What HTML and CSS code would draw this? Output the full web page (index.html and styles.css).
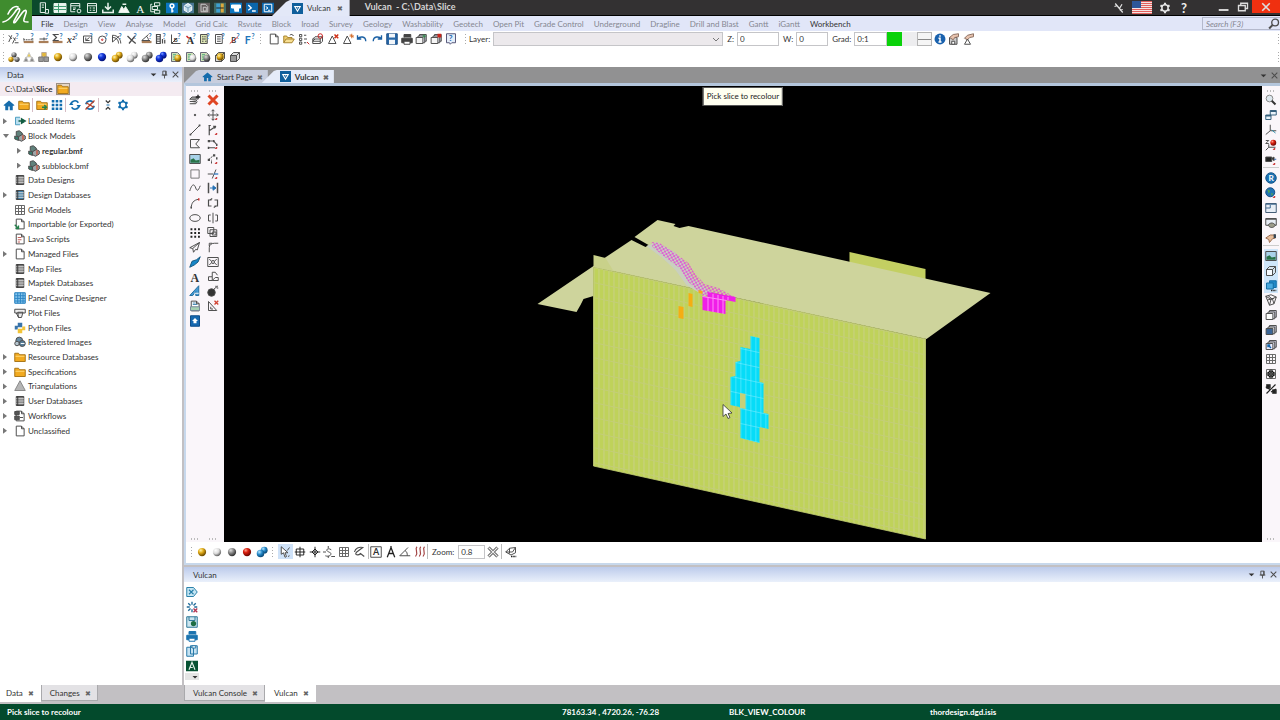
FILE: index.html
```
<!DOCTYPE html>
<html lang="en">
<head>
    <meta charset="UTF-8">
    <meta name="viewport" content="width=device-width, initial-scale=1.0">
    <title>Vulcan - C:\Data\Slice</title>
    <link rel="stylesheet" href="styles.css">
</head>
<body>
    <svg class="defs" aria-hidden="true">
        <defs>
            <radialGradient id="gold" cx=".35" cy=".3" r=".7"><stop offset="0" stop-color="#fff3a8"/><stop offset=".45" stop-color="#e0aa18"/><stop offset="1" stop-color="#6d4c00"/></radialGradient>
            <radialGradient id="silver" cx=".35" cy=".3" r=".7"><stop offset="0" stop-color="#fff"/><stop offset=".55" stop-color="#dcdcdc"/><stop offset="1" stop-color="#666"/></radialGradient>
            <radialGradient id="grey" cx=".35" cy=".3" r=".7"><stop offset="0" stop-color="#ddd"/><stop offset=".5" stop-color="#858585"/><stop offset="1" stop-color="#333"/></radialGradient>
            <radialGradient id="blue" cx=".35" cy=".3" r=".7"><stop offset="0" stop-color="#7e9cff"/><stop offset=".4" stop-color="#1237dc"/><stop offset="1" stop-color="#02107a"/></radialGradient>
            <radialGradient id="red" cx=".35" cy=".3" r=".7"><stop offset="0" stop-color="#ffa08c"/><stop offset=".4" stop-color="#dc2010"/><stop offset="1" stop-color="#6d0500"/></radialGradient>
            <radialGradient id="sky" cx=".35" cy=".3" r=".7"><stop offset="0" stop-color="#b8e6ff"/><stop offset=".5" stop-color="#2488c8"/><stop offset="1" stop-color="#084876"/></radialGradient>
        </defs>
    </svg>

    <header class="top">
        <div class="logo">
            <svg viewBox="0 0 32 30"><path d="M3 22c6-1 9-6 12-10 3-5 6-4 4 0l-5 9c-1 3 1 2 3-1l5-7c3-4 5-3 4 0l-2 6c-1 3 1 3 4 3M8 14c2-5 7-9 10-7" fill="none" stroke="#fff" stroke-width="1.6" stroke-linecap="round"/></svg>
        </div>
        <div class="top-main">
            <div class="titlebar">
                <div class="quick" data-icons="q-server q-table q-windowgear q-list q-download q-terrain q-letter q-flow q-key q-cube q-copy q-python q-plotter q-prompt q-console"></div>
                <div class="app-tab"><i data-icon="vulcan"></i><span>Vulcan</span><button class="tab-close" aria-label="Close">✖</button></div>
                <h1>Vulcan &nbsp;- C:\Data\Slice</h1>
                <div class="window-tools">
                    <button aria-label="Effects"><i data-icon="wand"></i></button>
                    <button class="flag" aria-label="Language"><svg viewBox="0 0 20 13"><path fill="#f4e4e4" d="M0 0h20v13H0z"/><path d="M0 .5h20M0 2.5h20M0 4.5h20M0 6.5h20M0 8.5h20M0 10.5h20M0 12.5h20" stroke="#e2605c"/><path fill="#2d5798" d="M0 0h9v7H0z"/></svg></button>
                    <button aria-label="Settings"><i data-icon="gear-light"></i></button>
                    <button class="help" aria-label="Help">?</button>
                </div>
                <div class="window-buttons">
                    <button aria-label="Minimize"><i data-icon="minimize"></i></button>
                    <button aria-label="Restore"><i data-icon="restore"></i></button>
                    <button class="close" aria-label="Close window"><i data-icon="close"></i></button>
                </div>
            </div>
            <div class="menubar">
                <nav>
                    <a class="on" href="#">File</a><a href="#">Design</a><a href="#">View</a><a href="#">Analyse</a><a href="#">Model</a><a href="#">Grid Calc</a><a href="#">Rsvute</a><a href="#">Block</a><a href="#">Iroad</a><a href="#">Survey</a><a href="#">Geology</a><a href="#">Washability</a><a href="#">Geotech</a><a href="#">Open Pit</a><a href="#">Grade Control</a><a href="#">Underground</a><a href="#">Dragline</a><a href="#">Drill and Blast</a><a href="#">Gantt</a><a href="#">iGantt</a><a class="on" href="#">Workbench</a>
                </nav>
                <label class="search"><input type="text" placeholder="Search (F3)" aria-label="Search"><i data-icon="search"></i></label>
            </div>
        </div>
    </header>

    <div class="toolbars">
        <div class="toolbar">
            <span class="grip"></span>
            <div class="tools query" data-icons="ask-xyz ask-dist ask-edge ask-sum ask-power ask-area ask-circle ask-arc ask-cross ask-angle ask-cols ask-axis ask-text ask-note ask-page ask-label ask-font"></div>
            <span class="grip"></span>
            <div class="tools files" data-icons="new open layers-list layer-del tri-del tri-new undo redo save print sheets sheets-red help-page"></div>
            <span class="grip"></span>
            <label class="field">Layer: <select class="layer"><option></option></select></label>
            <label class="field">Z: <input class="z" type="text" value="0"></label>
            <label class="field">W: <input class="w" type="text" value="0"></label>
            <label class="field">Grad: <input class="grad" type="text" value="0:1"></label>
            <button class="swatch" aria-label="Colour"></button><button class="pattern" aria-label="Pattern"></button><button class="line-style" aria-label="Line style"></button>
            <div class="tools marks" data-icons="info hand-save hand-tri"></div>
            <span class="grip end"></span>
        </div>
        <div class="toolbar">
            <span class="grip"></span>
            <div class="tools shading" data-icons="balls tri-light boxes ball-gold ball-silver ball-grey ball-blue pair-gold pair-silver pair-grey pair-blue file-gold file-silver file-grey cube-gold cube-grey"></div>
            <span class="grip end"></span>
        </div>
    </div>

    <div class="workspace">
        <aside class="side">
            <div class="panel-head"><h2>Data</h2><div class="panel-buttons" data-icons="drop pin shut"></div></div>
            <div class="path"><span>C:\Data\<b>Slice</b></span><button aria-label="Browse"><i data-icon="folder"></i></button></div>
            <div class="side-tools">
                <div data-icons="home folder"></div>
                <div data-icons="folder-go tiles"></div>
                <div data-icons="sync unsync"></div>
                <div data-icons="collapse gear"></div>
            </div>
            <ul class="tree">
                <li class="more"><a href="#"><i data-icon="loaded"></i>Loaded Items</a></li>
                <li class="more open"><a href="#"><i data-icon="blocks"></i>Block Models</a></li>
                <li class="more child"><a href="#"><i data-icon="blocks"></i><b>regular.bmf</b></a></li>
                <li class="more child"><a href="#"><i data-icon="blocks"></i>subblock.bmf</a></li>
                <li><a href="#"><i data-icon="db"></i>Data Designs</a></li>
                <li class="more"><a href="#"><i data-icon="db-blue"></i>Design Databases</a></li>
                <li><a href="#"><i data-icon="grid"></i>Grid Models</a></li>
                <li><a href="#"><i data-icon="import"></i>Importable (or Exported)</a></li>
                <li><a href="#"><i data-icon="script"></i>Lava Scripts</a></li>
                <li class="more"><a href="#"><i data-icon="new"></i>Managed Files</a></li>
                <li><a href="#"><i data-icon="db"></i>Map Files</a></li>
                <li><a href="#"><i data-icon="db"></i>Maptek Databases</a></li>
                <li><a href="#"><i data-icon="panel"></i>Panel Caving Designer</a></li>
                <li><a href="#"><i data-icon="plot"></i>Plot Files</a></li>
                <li><a href="#"><i data-icon="python"></i>Python Files</a></li>
                <li><a href="#"><i data-icon="images"></i>Registered Images</a></li>
                <li class="more"><a href="#"><i data-icon="folder"></i>Resource Databases</a></li>
                <li class="more"><a href="#"><i data-icon="folder"></i>Specifications</a></li>
                <li class="more"><a href="#"><i data-icon="triangle"></i>Triangulations</a></li>
                <li class="more"><a href="#"><i data-icon="db"></i>User Databases</a></li>
                <li class="more"><a href="#"><i data-icon="workflow"></i>Workflows</a></li>
                <li class="more"><a href="#"><i data-icon="new"></i>Unclassified</a></li>
            </ul>
            <div class="bottom-tabs">
                <div class="bottom-tab active">Data <button class="tab-close" aria-label="Close">✖</button></div>
                <div class="bottom-tab">Changes <button class="tab-close" aria-label="Close">✖</button></div>
            </div>
        </aside>

        <main class="main">
            <div class="doc-tabs">
                <div class="doc-tab"><i data-icon="home"></i>Start Page <button class="tab-close" aria-label="Close">✖</button></div>
                <div class="doc-tab active"><i data-icon="vulcan"></i>Vulcan <button class="tab-close" aria-label="Close">✖</button></div>
                <div class="panel-buttons" data-icons="drop shut"></div>
            </div>
            <div class="document">
                <div class="canvas-row">
                    <div class="toolbox">
                        <div class="column">
                            <span class="grip-h"></span>
                            <div class="column-tools create" data-icons="layers-add point line polygon picture square curve arc ellipse dots plane brush letter-a mirror-a csv vulcan-up"></div>
                            <span class="grip-h low"></span>
                        </div>
                        <div class="column">
                            <span class="grip-h"></span>
                            <div class="column-tools edit" data-icons="delete move pt-move pt-join pt-insert pt-trim span break split group fillet expand stack bomb tri-cut"></div>
                            <span class="grip-h low"></span>
                        </div>
                    </div>
                    <div class="viewport">
                        <svg class="scene" viewBox="224 86 1037 456" preserveAspectRatio="xMidYMid meet" role="img" aria-label="Block model slice">
                            <defs>
                                <pattern id="cells" width="5" height="15" patternUnits="userSpaceOnUse" patternTransform="translate(593 267) skewY(12.3)">
                                    <rect width="5" height="15" fill="#bfd25a"/>
                                    <path d="M.5 0v15" stroke="#c8d088"/>
                                    <path d="M0 .5h5" stroke="#c3cd78"/>
                                </pattern>
                                <pattern id="blocks" width="5" height="15" patternUnits="userSpaceOnUse" patternTransform="translate(740 348) skewY(12.3)">
                                    <path d="M0 0v15M0 0h5" stroke="#8ceeff"/>
                                </pattern>
                                <pattern id="specks" width="4" height="4" patternUnits="userSpaceOnUse" patternTransform="rotate(15)">
                                    <path d="M0 1h2M2 3h2" stroke="#e33fd8" stroke-width="1.4"/>
                                </pattern>
                            </defs>
                            <path fill="#c3cf62" d="M849 252l76 17v12l-76-17z"/>
                            <path fill="#ced49c" d="M537 304l56-38 11-8 27-18 14 7 3-2-14-8 23-17 18 4-2 2 6 2 9-2 302 67-64 46-333-72v29l-10 3-3 6-4 7z"/>
                            <path fill="url(#cells)" stroke="#c4cf74" stroke-width=".8" d="M593 267l332 72v200l-332-73z"/>
                            <path fill="#c9d18a" d="M593 255l12 3 8 13-20-4z"/>
                            <path fill="#c9cfc0" d="M646 246l10-4 18 10 12 12 6 13 20 16-8 3-18-11-11-15-13-12z"/>
                            <path fill="url(#specks)" d="M651 242l8 1 14 9 15 11 6 10 10 11 14 4 18 10-9 2-25-5-14-13-9-14-16-12-11-9z"/>
                            <path fill="#f01ee8" d="M702 296l5 1v-5l28 5v5l-10-2v14l-23-4z"/>
                            <path stroke="#ff8cf8" d="M707.5 297v14M712.5 294v18M717.5 295v18M722.5 296v18M727.5 297v3M702 296.5l24 4" fill="none"/>
                            <path fill="#f5ad12" d="M688 293l4 1v13l-4-1zM678 306l5 1v12l-5-1zM698 290l4 1v3l-4-1z"/>
                            <path fill="#06dcf8" d="M750 336l9 2v44l4 1v30l5 1v15l-9-2v16l-19-5v-29l-1-2-9-2v-28l5-1v-14l5-1v-14l10 2z"/>
                            <path fill="url(#blocks)" d="M750 336l9 2v44l4 1v30l5 1v15l-9-2v16l-19-5v-29l-1-2-9-2v-28l5-1v-14l5-1v-14l10 2z"/>
                            <path fill="#c5d077" d="M739.5 393l5.500 1v15l-5.500-1z"/>
                            <path d="M722.5 404.5v12l3-2.500 2 4.500 2-1-2-4 4-.5z" fill="#fff" stroke="#333" stroke-width=".8"/>
                        </svg>
                        <div class="tooltip">Pick slice to recolour</div>
                    </div>
                    <div class="toolbox right">
                        <div class="column">
                            <span class="grip-h"></span>
                            <div class="column-tools five" data-icons="zoom windows axes axes-ball camera"></div>
                            <div class="column-tools five" data-icons="reset globe window window-eye hand"></div>
                            <div class="column-tools ten" data-icons="picture cube-on layers-on mesh cube-back cube-solid cube-view grid grid-target scene-cut"></div>
                            <span class="grip-h low"></span>
                        </div>
                    </div>
                </div>
                <div class="view-bar">
                    <span class="grip"></span>
                    <div class="tools five-tools" data-icons="ball-gold ball-silver ball-grey ball-red pair-sky"></div>
                    <span class="grip"></span>
                    <div class="tools six-tools" data-icons="select snap-grid snap-point snap-s grid snap-curve"></div>
                    <div class="tools four-tools" data-icons="a-box a-compass angle waves"></div>
                    <label class="field zoom">Zoom: <input type="text" value="0.8"></label>
                    <div class="tools one-tool" data-icons="zoom-fit"></div>
                    <div class="tools one-tool" data-icons="mesh-dots"></div>
                </div>
            </div>

            <section class="console">
                <div class="panel-head"><h2>Vulcan</h2><div class="panel-buttons" data-icons="drop pin shut"></div></div>
                <div class="console-body">
                    <div class="console-tools" data-icons="tag burst save-go print-blue clipboard maptek"></div>
                    <button class="overflow" aria-label="More tools"><i data-icon="drop"></i></button>
                </div>
                <div class="bottom-tabs">
                    <div class="bottom-tab">Vulcan Console <button class="tab-close" aria-label="Close">✖</button></div>
                    <div class="bottom-tab active">Vulcan <button class="tab-close" aria-label="Close">✖</button></div>
                </div>
            </section>
        </main>
    </div>

    <footer class="status">
        <span>Pick slice to recolour</span>
        <span>78163.34 , 4720.26, -76.28</span>
        <span>BLK_VIEW_COLOUR</span>
        <span>thordesign.dgd.isis</span>
    </footer>
    <script src="icons.js"></script>
</body>
</html>
```
FILE: styles.css
```
* {
    margin: 0;
    padding: 0;
    box-sizing: border-box;
}

body {
    height: 100vh;
    display: flex;
    flex-direction: column;
    overflow: hidden;
    background: #fff;
    color: #333;
    font-family: 'Segoe UI', Lato, 'Open Sans', sans-serif;
    font-size: 8px;
    line-height: 12px;
}

button, input, select {
    font: inherit;
    color: inherit;
    border: 0;
    background: none;
    min-width: 0;
}

button {
    display: flex;
    align-items: center;
    justify-content: center;
}

a {
    color: inherit;
    text-decoration: none;
}

i {
    display: flex;
    flex: none;
}

.defs {
    position: absolute;
    width: 0;
    height: 0;
}

.icon {
    width: 12px;
    height: 12px;
    overflow: visible;
    fill: none;
    stroke: #4c4c4c;
    stroke-width: 1.3;
}

.icon text {
    stroke: none;
    fill: #333;
    font-size: 11px;
    line-height: 11px;
    font-weight: bold;
}

.icon .ask {
    fill: #3478b4;
    font-size: 9px;
    line-height: 9px;
}

/* title and menu */
.top {
    display: flex;
    height: 31px;
    flex: none;
}

.logo {
    width: 32px;
    height: 30px;
    background: #3f8c2e;
}

.top-main {
    flex: 1;
    display: flex;
    flex-direction: column;
}

.titlebar {
    display: flex;
    height: 16px;
    background: linear-gradient(90deg, #0b4a2c 130px, #333132 200px);
    border-bottom: 1px solid #000;
}

.quick {
    display: flex;
    align-items: center;
    margin-left: 4px;
}

.quick button {
    width: 16px;
    height: 15px;
}

.quick .icon {
    width: 14px;
    height: 12px;
    stroke: #e8f2ec;
}

.app-tab {
    display: flex;
    align-items: center;
    gap: 4px;
    height: 16px;
    padding: 0 7px 0 20px;
    background: #e3e8f8;
    clip-path: polygon(0 100%, 14px 2px, 18px 0, 100% 0, 100% 100%);
    margin-left: -4px;
}

.app-tab .icon {
    width: 11px;
    height: 11px;
}

.tab-close {
    font-size: 7px;
    color: #666;
    line-height: 8px;
}

.app-tab .tab-close {
    margin-left: 2px;
}

h1 {
    margin-left: 15px;
    font-size: 9px;
    line-height: 14px;
    font-weight: bold;
    color: #d5d5d5;
}

.window-tools {
    display: flex;
    align-items: center;
    gap: 7px;
    margin-left: auto;
    color: #eee;
}

.window-tools .icon {
    stroke: #e5e5e5;
}

.flag svg {
    width: 20px;
    height: 13px;
}

.help {
    font-size: 13px;
    font-weight: bold;
    width: 12px;
}

.window-buttons {
    display: flex;
    margin-left: 24px;
}

.window-buttons button {
    width: 19px;
    height: 13px;
}

.window-buttons .icon {
    stroke: #ddd;
}

.window-buttons .close {
    width: 28px;
    background: #f03010;
}

.menubar {
    flex: 1;
    display: flex;
    align-items: center;
    background: #e1e6f8;
}

nav {
    display: flex;
    gap: 10px;
    padding-left: 9px;
    color: #858791;
    white-space: nowrap;
}

nav .on {
    color: #333;
}

.search {
    display: flex;
    align-items: center;
    width: 78px;
    height: 13px;
    margin-left: auto;
    padding-left: 3px;
    border: 1px solid #b4b9cc;
    border-right: 0;
}

.search input {
    flex: 1;
    font-style: italic;
}

.search input::placeholder {
    color: #858791;
}

/* toolbars */
.toolbars {
    height: 36px;
    flex: none;
}

.toolbar {
    display: flex;
    align-items: center;
    height: 16px;
}

.toolbar + .toolbar {
    height: 20px;
}

.grip {
    width: 3px;
    height: 12px;
    margin: 0 2px;
    flex: none;
    background: radial-gradient(circle, #aaa 1px, transparent 1px) 0 0 / 3px 3px;
}

.grip.end {
    margin-left: auto;
    margin-right: 0;
}

.tools {
    display: flex;
    flex: none;
}

.tools button {
    flex: 1;
    height: 15px;
}

.query {
    width: 250px;
}

.files {
    width: 191px;
    margin: 0 4px 0 3px;
}

.shading {
    width: 235px;
}

.marks {
    width: 44px;
}

.field {
    display: flex;
    align-items: center;
    gap: 3px;
    margin-right: 4px;
    white-space: nowrap;
}

.field input, .field select {
    height: 14px;
    border: 1px solid #c5c5c8;
    background: #fff;
    padding: 0 2px;
}

.field .layer {
    width: 230px;
    appearance: none;
    background:
        linear-gradient(45deg, transparent 45%, #777 45% 65%, transparent 65%) 219px 5px / 3px 3px no-repeat,
        linear-gradient(-45deg, transparent 45%, #777 45% 65%, transparent 65%) 222px 5px / 3px 3px no-repeat,
        #ece9ec;
}

.z {
    width: 42px;
}

.w {
    width: 32px;
}

.field .grad {
    width: 33px;
    margin-right: -4px;
}

.swatch, .pattern, .line-style {
    width: 15px;
    height: 14px;
    background: #0ad20a;
}

.pattern {
    background: #ededef;
}

.line-style {
    border: 1px solid #b5b5b5;
    background: linear-gradient(#888, #888) 0 50% / 100% 1px no-repeat #f5f5f5;
}

/* data panel */
.workspace {
    flex: 1;
    display: flex;
    min-height: 0;
    background: #c2c0c3;
}

.side {
    width: 182px;
    flex: none;
    display: flex;
    flex-direction: column;
    background: #fff;
}

.panel-head {
    display: flex;
    align-items: center;
    justify-content: space-between;
    height: 15px;
    flex: none;
    padding: 0 1px 0 7px;
    background: linear-gradient(#bccbeb, #eaf0fb);
}

h2 {
    font-size: 8px;
    font-weight: normal;
}

.panel-buttons {
    display: flex;
}

.panel-buttons button {
    width: 11px;
}

.panel-buttons .icon {
    width: 9px;
    height: 9px;
}

.path {
    display: flex;
    align-items: center;
    gap: 4px;
    height: 14px;
    padding-left: 5px;
    background: #f4ebf1;
}

.path button {
    width: 14px;
    height: 12px;
    border: 1px solid #9a8f83;
    background: #e4d5c4;
}

.side-tools {
    display: flex;
    padding: 2px;
}

.side-tools div {
    display: flex;
    gap: 1px;
    padding-right: 1px;
    margin-right: 2px;
    border-right: 1px solid #d5bcc4;
}

.side-tools div:last-child {
    border: 0;
}

.side-tools button {
    width: 14px;
    height: 14px;
}

.tree {
    display: grid;
    grid-auto-rows: 1fr;
    height: 324px;
    list-style: none;
}

.tree li {
    display: flex;
    align-items: center;
    padding-left: 14px;
}

.tree a {
    display: flex;
    align-items: center;
    gap: 2px;
}

.tree .child {
    padding-left: 28px;
}

.tree .more::before {
    content: "";
    width: 4px;
    height: 6px;
    margin: 0 7px 0 -11px;
    background: #777;
    clip-path: polygon(0 0, 100% 50%, 0 100%);
}

.tree .more.open::before {
    width: 6px;
    height: 4px;
    margin: 0 5px 0 -11px;
    clip-path: polygon(0 0, 100% 0, 50% 100%);
}

.bottom-tabs {
    display: flex;
    align-items: flex-start;
    height: 19px;
    margin-top: auto;
    background: #c2c0c3;
}

.bottom-tab {
    display: flex;
    align-items: center;
    gap: 5px;
    height: 16px;
    padding: 0 6px 0 8px;
    border: 1px solid #a9a9ac;
    border-top: 0;
    background: #e3e2e5;
}

.bottom-tab.active {
    height: 17px;
    border-color: #fff;
    background: #fff;
}

.side .bottom-tab.active {
    padding-left: 5px;
}

/* document */
.main {
    flex: 1;
    display: flex;
    flex-direction: column;
    min-width: 0;
    margin-left: 2px;
}

.doc-tabs {
    display: flex;
    align-items: flex-end;
    height: 16px;
    flex: none;
    background: #919192;
}

.doc-tab {
    display: flex;
    align-items: center;
    gap: 4px;
    height: 13px;
    padding: 0 5px 0 18px;
    background: #c8cede;
    clip-path: polygon(0 100%, 12px 1px, 15px 0, 100% 0, 100% 100%);
}

.doc-tab .icon {
    width: 11px;
    height: 11px;
}

.doc-tab.active {
    margin-left: -6px;
    background: #e6ecf9;
    font-weight: bold;
}

.doc-tabs .panel-buttons {
    margin-left: auto;
    align-self: center;
}

.document {
    flex: 1;
    display: flex;
    flex-direction: column;
    min-height: 0;
    border: 2px solid #c7d8ec;
    border-top: 3px solid #b4c6dc;
    border-right: 0;
    background: #fff;
}

.canvas-row {
    flex: 1;
    display: flex;
    min-height: 0;
}

.toolbox {
    display: flex;
    padding-right: 2px;
    background: #faf6fa;
}

.column {
    width: 18px;
    display: flex;
    flex-direction: column;
}

.grip-h {
    height: 4px;
    margin: 3px 4px 0;
    background: radial-gradient(circle, #bbb 1px, transparent 1px) 0 0 / 3px 4px;
}

.grip-h.low {
    margin: auto 4px 1px;
}

.column-tools {
    display: grid;
    grid-auto-rows: 1fr;
}

.create {
    height: 235px;
}

.edit {
    height: 220px;
}

.five {
    height: 74px;
    margin-bottom: 4px;
    box-shadow: 0 2px 0 -1px #ccc;
}

.ten {
    height: 147px;
}

.right {
    padding: 0;
}

.ten button:nth-child(-n+3) {
    background: #cfe6fa;
    margin: 0 2px;
}

.viewport {
    flex: 1;
    position: relative;
    background: #000;
    overflow: hidden;
}

.scene {
    display: block;
    width: 100%;
    height: 100%;
}

.tooltip {
    position: absolute;
    top: 1px;
    left: 50%;
    transform: translateX(-50%);
    padding: 2px 3px 3px;
    border: 1px solid #555;
    background: #fffff0;
    color: #222;
    white-space: nowrap;
}

.view-bar {
    display: flex;
    align-items: center;
    height: 21px;
    flex: none;
    padding: 0 0 2px 2px;
}

.five-tools {
    width: 74px;
}

.six-tools {
    width: 88px;
    margin-left: 2px;
}

.six-tools button:first-child {
    background: #cfe2f8;
}

.four-tools {
    width: 60px;
    border-left: 1px solid #bbb;
    border-right: 1px solid #bbb;
    margin: 0 4px 0 2px;
}

.zoom {
    margin-right: 0;
    gap: 4px;
}

.zoom input {
    width: 27px;
}

.one-tool {
    width: 16px;
}

.one-tool + .one-tool {
    width: 18px;
    border-left: 1px solid #bbb;
}

/* console */
.console {
    height: 137px;
    flex: none;
    margin-top: 2px;
    display: flex;
    flex-direction: column;
}

.console .panel-head {
    padding-left: 9px;
}

.console-body {
    flex: 1;
    display: flex;
    flex-direction: column;
    padding: 3px 1px;
    background: #fff;
}

.console-tools {
    display: grid;
    grid-auto-rows: 1fr;
    width: 14px;
    height: 88px;
}

.overflow {
    width: 14px;
    height: 7px;
    justify-content: flex-end;
    background: #e5e5e5;
}

.overflow .icon {
    width: 8px;
    height: 8px;
}

.status {
    display: grid;
    grid-template-columns: 555fr 167fr 201fr 350fr;
    align-items: center;
    height: 16px;
    flex: none;
    padding-left: 7px;
    background: #034a2c;
    color: #fff;
    font-weight: bold;
}
```
FILE: icons.js
```
const ask = '<text class="ask" x="10" y="8">?</text>';
const ball = (c, x = 8, y = 8, r = 5.5) => `<circle cx="${x}" cy="${y}" r="${r}" fill="url(#${c})" stroke="none"/>`;
const pair = c => ball(c, 11, 5.5, 4.5) + ball(c, 6, 10, 5);
const file = c => `<path d="M2 2h8l3 3v9H2z" fill="#cfdfb8" stroke="#667"/><path d="M4 5h4M4 8h3M4 11h3" stroke="#4a7"/>` + ball(c, 10.5, 9.5, 4.5);
const cube = (front, side) => `<path d="M2 6h8v8H2z" fill="${front}"/><path d="M2 6l4-4h8v8l-4 4V6zM10 6l4-4" fill="${side}"/>`;
const tile = (c, inner) => `<path d="M0 1h16v14H0z" fill="${c}" stroke="none"/>${inner}`;
const page = '<path d="M3 1.5h7l3.5 3.5v9.5H3z" fill="#fff"/><path d="M10 1.5V5h3.5"/>';
const db = c => `<path d="M3 2h10v12H3z" fill="${c}" stroke="#444"/><path d="M3 5h10M3 8h10M3 11h10" stroke="#ddd"/><path d="M5 2v12" stroke="#333"/>`;
const folder = '<path d="M1 3h5l1.5 2H15v9H1z" fill="#f2aa20" stroke="#a87518"/><path d="M2 7h12" stroke="#ffd978"/>';
const disk = '<path d="M1 1h14v14H1z" fill="#2868a8" stroke="#1d4f86"/><path d="M4 1h8v5H4zM4 9h8v6H4z" fill="#f2f6fa" stroke="none"/>';
const printer = c => `<path d="M4 6V2h9v4M1 7h14v6H1z" fill="${c}" stroke="${c}"/><path d="M4 11h8v4H4z" fill="#fff" stroke="${c}"/>`;
const corner = '<path d="M13 12v2h-2z" fill="#c33" stroke="#c33"/>';
const brown = '<path d="M1 12h13" stroke="#a97e58" stroke-width="3"/>';
const cubeStack = (f, extra = '') => `<path d="M6 2h9v9H6z" fill="#ccd"/><path d="M4 4h9v9H4z" fill="#e5e5ee"/><path d="M1.5 6h9v8h-9z" fill="${f}"/>${extra}`;
const gear = '<circle cx="8" cy="8" r="4.2" stroke-width="2"/><path d="M8 1v3M8 12v3M1.9 4.5l2.6 1.5M11.5 10l2.6 1.5M1.9 11.5L4.5 10M11.5 6l2.6-1.5" stroke-width="2.8"/>';
const pic = '<path d="M1 2h14v12H1z" fill="#a9d2ea"/><path d="M2 13V9l4-2 3 3 5-1v4z" fill="#287348" stroke="none"/>';
const gridLines = '<path d="M2 2h12v12H2zM2 6h12M2 10h12M6 2v12M10 2v12" stroke="#666"/>';

const icons = {
    'q-server': '<path d="M3 1h7v13H3zM5 4h3M5 7h3M10 10h4v5h-5" />',
    'q-table': '<path d="M0 2h16v12H0z" fill="#e9f5ed"/><path d="M0 6h16M0 10h16M6 2v12" stroke="#3d9a70"/>',
    'q-windowgear': '<path d="M1 2h12v6M1 2v11h6M1 5h12M4 8h4M4 10h3"/><circle cx="12" cy="12" r="2.5"/>',
    'q-list': '<path d="M2 2h12v12H2zM2 5h12M5 8h2M9 8h3M5 11h2M9 11h3"/>',
    'q-download': '<path d="M8 1v8M4 6l4 4 4-4M1 10v4h14v-4" stroke-width="2"/>',
    'q-terrain': '<path d="M1 14l4-8 3 4 2-4 5 8z" fill="#f4f8f5"/><path d="M6 3h5" stroke-width="2"/>',
    'q-letter': '<text x="3" y="14" style="fill:#f1f6f3;font:15px Liberation Serif,serif">A</text>',
    'q-flow': '<path d="M6 1h7v4H6zM3 6h7v4H3zM6 11h7v4H6zM3 3H1v10h5"/>',
    'q-key': tile('#0b76c0', '<circle cx="8" cy="5" r="2.5" stroke-width="2" stroke="#fff"/><path d="M8 8v6M8 12h2" stroke="#fff" stroke-width="2"/>'),
    'q-cube': tile('#4a7896', '<path d="M3 5l5-3 5 3v6l-5 3-5-3z" fill="#c8e0ee" stroke="#fff"/><path d="M3 5l5 3 5-3M8 8v6" stroke="#6d9ab4"/>'),
    'q-copy': tile('#645f5e', '<path d="M4 3h6l3 3v7H4z" stroke="#ccc"/><path d="M7 7h4v5H7z" stroke="#ccc"/>'),
    'q-python': tile('#3f6d68', '<path d="M3 2h5v12H3z" fill="#3da0d0" stroke="none"/><path d="M9 2h4v12H9z" fill="#dca83c" stroke="none"/><path d="M3 8h10" stroke="#222"/>'),
    'q-plotter': tile('#0b76c0', '<path d="M2 4h12v4H2z" fill="#fff" stroke="#fff"/><path d="M5 8h7v5H6z" fill="#fff" stroke="none"/>'),
    'q-prompt': tile('#0b66ac', '<path d="M3 4l4 4-4 3M8 12h5" stroke="#fff" stroke-width="1.8"/>'),
    'q-console': tile('#0b66ac', '<path d="M3 3h10v10H3zM5 6l3 2-3 2M8 11h3" stroke="#fff"/>'),
    vulcan: '<path d="M0 0h16v16H0z" fill="#0f5f9c" stroke="none"/><path d="M4 5h8l-4 7z" stroke="#fff" stroke-width="1.6"/><path d="M7 7h2" stroke="#fff"/>',
    wand: '<path d="M3 2l10 12M2 6l3-1M12 3l-3 5M9 11l4-1" stroke-width="1.6"/>',
    'gear-light': gear,
    gear: `<g stroke="#146eae">${gear}</g>`,
    minimize: '<path d="M1 12h13" stroke-width="2.5"/>',
    restore: '<path d="M2 6h9v7H2zM5 6V3h9v7h-3" stroke-width="1.8"/>',
    close: '<path d="M3 3l10 10M13 3L3 13" stroke-width="2.2"/>',
    search: '<circle cx="9.5" cy="6" r="4.5" stroke-width="1.8"/><path d="M6 9.5L1.5 14" stroke-width="2.8"/>',

    'ask-xyz': '<path d="M1 3l4 5M5 3L1 12M7 6l3 4M10 6l-4 8M9 13h5" />' + ask,
    'ask-dist': brown + '<path d="M1 9h12M1 7v4M13 7v4" stroke-dasharray="2 1"/>' + ask,
    'ask-edge': brown + '<path d="M2 8h10M8 6v4"/>' + ask,
    'ask-sum': brown + '<path d="M9 2H2l4 4-4 4h7" stroke-width="1.6"/>' + ask,
    'ask-power': '<text x="0" y="13" style="font:italic bold 13px Liberation Serif,serif">x²</text>' + ask,
    'ask-area': '<path d="M2 4h11v9H2zM5 10l5-4M5 6v4h5"/>' + ask,
    'ask-circle': '<circle cx="7" cy="9" r="5"/><circle cx="7" cy="9" r="1" stroke="#c22"/>' + ask,
    'ask-arc': '<path d="M2 3c7 0 11 5 11 11M2 6c5 0 8 3 8 8M2 3v9l9-8"/>' + ask,
    'ask-cross': '<path d="M2 4l5 5 6 5M12 4l-8 10" stroke-width="1.7"/>' + ask,
    'ask-angle': brown + '<path d="M1 10L10 2M1 10h11M7 4c2 2 3 4 3 6"/>' + ask,
    'ask-cols': '<path d="M2 2h5v12H2zM2 5h5M2 8h5M2 11h5M10 8v6M13 9v5" stroke-width="1.6"/>' + ask,
    'ask-axis': '<path d="M2 2v12h12M2 14l7-7"/><text x="5" y="12" style="font-size:8px">B</text>' + ask,
    'ask-text': '<path d="M2 4l3 3" stroke="#c22" stroke-width="2"/><text x="2" y="14" style="font:bold 14px Liberation Serif,serif">A</text>' + ask,
    'ask-note': '<path d="M2 2h9v12H2z" fill="#dde6b4"/><path d="M4 5h2M7 5h2M4 8h5M4 11h2M8 11h2"/>' + ask,
    'ask-page': '<path d="M2 2h9v12H2zM4 5h5M4 8h5M4 11h5"/>' + ask,
    'ask-label': '<text x="3" y="13" style="font-size:10px">B</text><path d="M1 14L12 5" stroke="#c33"/>' + ask,
    'ask-font': '<text x="1" y="14" style="fill:#1f76bc;font-size:14px">F</text>' + ask,

    new: page,
    open: '<path d="M1 13V4h4l1 2h6v3" fill="#f1cf6f" stroke="#a7842f"/><path d="M1 13l3-5h11l-3 5z" fill="#f8df92" stroke="#a7842f"/><path d="M9 3c2-2 4-1 5 1"/>',
    'layers-list': '<path d="M2 2h3v3H2zM2 7h3v3H2zM2 12h3v3H2zM8 3h3M8 8h4M8 13h3"/><path d="M12 12l3 3" stroke="#c22"/>',
    'layer-del': '<path d="M1 8l3-3h10l-3 3zM1 11l3-3M1 14h10l3-3V5M1 8v6M1 11h10M11 8v6"/><circle cx="11" cy="4" r="3" stroke="#c22"/>',
    'tri-del': '<path d="M2 14L7 4l5 10z"/><path d="M10 2l5 5M15 2l-5 5" stroke="#d03018" stroke-width="2"/>',
    'tri-new': '<path d="M2 14L7 4l5 10z"/><path d="M13 1v6M10 4h6M11 2l4 4" stroke="#d26824"/>',
    undo: '<path d="M2 3v5h5M2 8c3-4 11-4 11 3" stroke="#1b60a4" stroke-width="1.8"/>',
    redo: '<path d="M14 3v5H9M14 8C11 4 3 4 3 11" stroke="#1b60a4" stroke-width="1.8"/>',
    save: disk,
    print: printer('#444'),
    'print-blue': printer('#1c74b0'),
    sheets: cubeStack('#f5f5f5', '<path d="M12 2v5M10 4h5" stroke="#2d8a48"/>'),
    'sheets-red': cubeStack('#f5f5f5', '<path d="M10 1h5v5h-5z" fill="#c9251c" stroke="none"/>'),
    'help-page': '<path d="M2 1h12v12H9l-2 2-1-2H2z" fill="#e4eefa" stroke="#557"/><text x="5" y="11" style="fill:#1767ae">?</text>',
    info: '<circle cx="8" cy="8" r="7.3" fill="#1a62ae" stroke="none"/><path d="M8 3v2M6 7h2v5M6 12h4" stroke="#fff" stroke-width="2"/>',
    'hand-save': '<path d="M2 6h10v9H2z" fill="#ccc"/><path d="M2 6l5-4 7-1v4l-5 1-2 3z" fill="#e8c3ae" stroke="#8b6f62"/><path d="M5 11h4v4H5z" fill="#fff"/>',
    'hand-tri': '<path d="M2 7l4-4 8-2v4L9 6 6 9z" fill="#e8c3ae" stroke="#8b6f62"/><path d="M2 15l4-7 4 7z"/>',

    balls: ball('grey', 8, 5, 3.5) + ball('gold', 4, 11, 3.5) + ball('grey', 12, 11, 3.5),
    'tri-light': '<path d="M8 2l3 6H5z" fill="#e8cd5c" stroke="#ccc"/><path d="M4 8l3 6H1zM12 8l3 6H9z" fill="#888" stroke="#bbb"/>',
    boxes: '<path d="M5 2h6v6H5z" fill="#e3b93c" stroke="#ba9"/><path d="M1 8h6v6H1zM8 8h6v6H8z" fill="#999" stroke="#777"/>',
    'ball-gold': ball('gold'),
    'ball-silver': ball('silver'),
    'ball-grey': ball('grey'),
    'ball-blue': ball('blue'),
    'ball-red': ball('red'),
    'pair-gold': pair('gold'),
    'pair-silver': pair('silver'),
    'pair-grey': pair('grey'),
    'pair-blue': pair('blue'),
    'pair-sky': pair('sky'),
    'file-gold': file('gold'),
    'file-silver': file('silver'),
    'file-grey': file('grey'),
    'cube-gold': cube('#ddd', '#d8bc60') + ball('gold', 8, 8, 4.5),
    'cube-grey': cube('#999', '#ddd'),

    drop: '<path d="M3 6h10l-5 5z" fill="#333" stroke="none"/>',
    pin: '<path d="M5 2h6v7H5zM3 9h10M8 9v6M10 2v7" stroke-width="1.6"/>',
    shut: '<path d="M3 3l10 10M13 3L3 13" stroke-width="1.8"/>',
    home: '<path d="M1 8l7-6 7 6v1h-2v6h-4v-5H7v5H3V9H1z" fill="#156cac" stroke="none"/>',
    folder,
    'folder-go': folder + '<path d="M8 11h5M11 8l3 3-3 3" stroke="#23844c" stroke-width="1.8"/>',
    tiles: '<path d="M1 3h14M1 8h14M1 13h14" stroke="#146eae" stroke-width="3.5" stroke-dasharray="3.5 1.7"/>',
    sync: '<path d="M13.5 9a5.5 5.5 0 01-10 2M2.500 7a5.500 5.500 0 0110-2" stroke="#146eae" stroke-width="2"/><path d="M0 8h6L3 4zM16 8h-6l3 4z" fill="#146eae" stroke="none"/>',
    unsync: '<path d="M13.5 9a5.5 5.5 0 01-10 2M2.500 7a5.500 5.500 0 0110-2" stroke="#146eae" stroke-width="2.2"/><path d="M2 14L14 2M3 5l10 6" stroke="#b8432c" stroke-width="1.8"/>',
    collapse: '<path d="M5 2l3 3 3-3M5 14l3-3 3 3" stroke="#333" stroke-width="1.5"/><path d="M6 8h4" stroke="#146eae"/>',

    loaded: '<path d="M8 3H2v10h6" fill="#b9dff0" stroke="#4b9cc0"/><path d="M6 8h5M10 5l5 3-5 3z" fill="#125c42" stroke="#125c42" stroke-width="1.8"/>',
    blocks: '<path d="M3 2l4-1 4 3v4l-4 2-4-3z" fill="#60827c"/><path d="M1 8l5 1v5l-5-2z" fill="#387a6c"/><path d="M6 9l5-3 4 2v4l-5 3-4-2z" fill="#9fa5a8"/><path d="M12 7v6" stroke="#c65a45" stroke-width="2"/>',
    db: db('#777'),
    'db-blue': db('#4380a8'),
    grid: gridLines,
    import: page + '<path d="M1 9l5 5M6 10v4H2" stroke="#24804b" stroke-width="1.8"/>',
    script: page + '<path d="M5 6h5M5 9h5M5 12h3" stroke="#c25b55"/>',
    panel: '<path d="M1 1h14v14H1z" fill="#8ac8ee" stroke="#1d7abc"/><path d="M1 5h14M1 8.5h14M1 12h14M5 1v14M8.5 1v14M12 1v14" stroke="#2984c4"/>',
    plot: '<path d="M1 3h14v5H1zM3 8l3 6M5 7h7l-2 7H6z" fill="#eee"/>',
    python: '<path d="M5 1h6v6H5v3H1V5h4z" fill="#3974aa" stroke="none"/><path d="M11 6h4v5h-4v4H5V9h6z" fill="#f2c438" stroke="none"/>',
    images: '<circle cx="7" cy="6" r="4.5" fill="#688da6"/><circle cx="4" cy="10" r="3" fill="#b6c6d0"/><circle cx="11" cy="10" r="4" fill="#577d98"/><path d="M9 10h5" stroke="#fff"/>',
    triangle: '<path d="M8 1l7 13H1z" fill="#b5b5b5" stroke="#888"/>',
    workflow: page + '<path d="M1 2h6v4H1zM1 8h6v5H1z" fill="#555"/><path d="M8 10h4"/>',

    'layers-add': '<path d="M1 7l3-3h7l-2 3zM1 10h8l2-3M1 13h8l2-3" fill="#aaa"/><path d="M12 1v6M9 4h6" stroke="#222" stroke-width="1.8"/>',
    point: '<circle cx="8" cy="8" r="1" fill="#333"/>',
    line: '<path d="M2 14L14 2"/><path d="M2 13v1h1M13 2h1v1" stroke-width="2.5"/>',
    polygon: '<path d="M2 2h12L9 8l5 5H2z"/>',
    picture: pic,
    square: '<path d="M2.5 2.5h11v11h-11z" stroke="#777"/>',
    curve: '<path d="M1 12C4 2 7 2 9 8s4 2 6-3"/>',
    arc: '<path d="M3 15C3 8 6 4 13 3"/><path d="M12 3h2" stroke="#c33" stroke-width="3"/><path d="M2 14h2" stroke-width="2.5"/>',
    ellipse: '<ellipse cx="8" cy="8" rx="7" ry="4.5"/>',
    dots: '<path d="M2 3h13M2 8h13M2 13h13" stroke="#222" stroke-width="2.5" stroke-dasharray="2.5 2.5"/>',
    plane: '<path d="M14 2L1 9l4 1 1 5 3-4 2 1z"/><path d="M5 10l9-8"/>',
    brush: '<path d="M1 15l3-8 6-2 5-4-3 7-5 4z" fill="#1686c8" stroke="#155882"/>',
    'letter-a': '<text x="2" y="14" style="font:bold 16px Liberation Serif,serif">A</text>',
    'mirror-a': '<path d="M13 1v13H9V9L5 14H1z" fill="#4499d3" stroke="#256e9e"/><path d="M7 11h6" stroke="#fff"/>',
    csv: page + '<path d="M2 9h12v5H2z" fill="#a5d0b1" stroke="#789"/><path d="M5 4h4M5 6h6" stroke="#4a8bb4"/>',
    'vulcan-up': '<path d="M2 1h12v14H2z" fill="#1668b0" stroke="#0d4b88"/><path d="M8 4l4 4h-2v3H6V8H4z" fill="#fff" stroke="none"/>',
    delete: '<path d="M2 2l12 12M14 2L2 14" stroke="#df4524" stroke-width="4"/>',
    move: '<path d="M8 1v14M1 8h14M6 3l2-2 2 2M6 13l2 2 2-2M3 6L1 8l2 2M13 6l2 2-2 2"/>' + corner,
    'pt-move': '<path d="M3 15V2M3 9l9-6M2 2h3M12 3l-4 0M12 3l-2 3" stroke-width="1.6"/>' + corner,
    'pt-join': '<path d="M2 4h7l4 5M2 13h9" stroke-width="1.5"/><path d="M1 4h3M8 4h2M12 9h2M1 13h2" stroke-width="3"/>' + corner,
    'pt-insert': '<path d="M2 9L9 3M6 14V9" stroke-dasharray="3 1"/><path d="M1 9h3M8 3h3M12 7h2" stroke-width="3"/>' + corner,
    'pt-trim': '<path d="M1 8h7M12 2L7 14"/><path d="M9 8h6" stroke="#367bc0" stroke-width="1.8"/>' + corner,
    span: '<path d="M2 1v14M14 1v14" stroke-width="2"/><path d="M4 8h7M8 5l4 3-4 3z" stroke="#2672b5" fill="#2672b5"/>',
    break: '<path d="M6 4H2v8h4M10 4h4v8h-4M4 4l3-2M12 12l-3 2" stroke-width="1.6"/>',
    split: '<path d="M8 1v14M5 4H2v8h3M11 4h3v8h-3"/>',
    group: '<path d="M1 2h8v8H1zM4 5h9v9H4zM7 8h5v4H7z"/>',
    fillet: '<path d="M3 15V9c0-4 3-6 7-6h5M3 7V3h4"/>',
    expand: '<path d="M1 2h14v12H1zM3 4l3 3M13 4l-3 3M3 12l3-3M13 12l-3-3"/><circle cx="8" cy="8" r="2"/>',
    stack: '<path d="M2 9h5v5H2zM7 9V3h4l3 4M7 14h8v-4h-4z"/>',
    bomb: '<circle cx="6" cy="10" r="5" fill="#333"/><path d="M9 6l3-3M12 1v2M15 4h-2M14 1l-1 2" stroke="#333"/>',
    'tri-cut': '<path d="M2 2v12h11zM5 9v3h3"/><path d="M10 1l5 5M15 1l-5 5" stroke="#d14232" stroke-width="1.8"/>',

    zoom: '<circle cx="6" cy="6" r="4.5" fill="#dde7ee" stroke="#888"/><path d="M9 9l5 5" stroke="#333" stroke-width="2.6"/>',
    windows: '<path d="M7 2h8v6H7zM1 8h7v6H1z" fill="#e8f2fa" stroke="#345f7c"/><path d="M7 3h8M1 9h7" stroke="#345f7c" stroke-width="2"/>',
    axes: '<path d="M7 1v8L1 14M7 9h8"/><path d="M9 8l5 4" stroke="#2b8ca8"/>',
    'axes-ball': '<path d="M5 7v4l-4 4M5 11h9M1 2h4L1 6h4"/>' + ball('red', 11, 5, 4) + corner,
    camera: '<path d="M1 4h8v6H1zM9 6l3-2v5z" fill="#222"/><path d="M12 7h3" stroke="#36a"/>' + corner,
    reset: '<circle cx="8" cy="8" r="7" fill="#1b71b2" stroke="#15558a"/><text x="4.5" y="12" style="fill:#fff">R</text>',
    globe: '<circle cx="7" cy="7" r="6" fill="#2074b4" stroke="#174d84"/><path d="M3 3l4 2-2 4zM8 8l3 1-2 3z" fill="#51a556" stroke="none"/>' + corner,
    window: '<path d="M1 2h14v12H1z" fill="#e7edf5" stroke="#3f5872"/><path d="M1 3h14M1 8h6V4" stroke="#3f6890"/>',
    'window-eye': '<path d="M1 2h14v9H1z" fill="#e7edf5"/><path d="M1 3h14"/><path d="M4 11c3-4 7-4 10 0-3 4-7 4-10 0z" fill="#9b9b8a"/>',
    hand: '<path d="M1 8l6-4h7v4l-4 1-4 5-1-4z" fill="#e8bd9b" stroke="#95694c"/><path d="M13 3v5" stroke="#345" stroke-width="3"/>',
    'cube-on': cube('#f7fbff', '#d7e4ee'),
    'layers-on': '<path d="M6 1h9v9H6z" fill="#2288c8" stroke="#146ca4"/><path d="M2 4h9v8H2z" fill="#48a9df" stroke="#146ca4"/><path d="M8 14h7" stroke="#222" stroke-width="2" stroke-dasharray="2 1"/>',
    mesh: '<path d="M1 3l7-2 7 3-3 9-6 2zM1 3l7 4 7-3M8 7l-2 8M4 2l6 5 2 6M3 8l9-2"/>',
    'cube-back': cubeStack('#fff'),
    'cube-solid': cubeStack('#3b6496'),
    'cube-view': cubeStack('#eef', '<path d="M4 8l4 4M4 11V8h3" stroke="#1565aa" stroke-width="2"/>'),
    'grid-target': gridLines + '<circle cx="8" cy="8" r="4" stroke="#111"/><path d="M8 2v12M2 8h12" stroke="#111"/>',
    'scene-cut': '<path d="M2 2h5v5H2zM10 9h5v5h-5z" fill="#222"/><path d="M14 2L2 14M1 5l6 4M8 12l7-4" stroke="#222" stroke-width="1.6"/>',

    select: '<path d="M3 1v10l3-2 2 6 2-1-2-5h4z" fill="#fff"/><path d="M14 2l-3 4M12 14l2-1"/>',
    'snap-grid': '<path d="M8 1v14M1 8h14M3 4h10v8H3z" stroke="#222"/>',
    'snap-point': '<path d="M8 1v14M1 8h14" stroke="#222"/><path d="M8 4l4 4-4 4-4-4z" stroke="#222"/>',
    'snap-s': '<path d="M7 0v3M11 5C7 2 3 5 6 7s6 2 4 5-7 1-7 1M0 8h4M7 13v3M11 14h5"/>',
    'snap-curve': '<path d="M2 8c1-5 6-7 11-6L5 8c-4 4 2 5 5 2l5 4" stroke-width="1.5"/>',
    'a-box': '<path d="M1 1h14v14H1z"/><text x="4" y="12" style="font-size:12px">A</text>',
    'a-compass': '<path d="M3 15L8 2l5 13M5 10h6M8 0v3" stroke="#222" stroke-width="1.7"/>',
    angle: '<path d="M12 2L1 13h14M8 6c3 2 3 4 3 7"/>',
    waves: '<path d="M4 1C0 5 7 7 2 14M9 1C5 5 12 7 7 14M14 1c-4 4 3 6-2 13" stroke="#a34545" stroke-width="1.6"/>',
    'zoom-fit': '<path d="M2 2l12 12M14 2L2 14" stroke-width="4"/><path d="M2 2l12 12M14 2L2 14" stroke="#eee" stroke-width="1.6"/>',
    'mesh-dots': '<path d="M1 8l5-5 8-1v7l-6 3zM1 8h9l4-6M6 3v7"/><path d="M8 14h7" stroke="#222" stroke-width="2" stroke-dasharray="2 1"/>',
    tag: '<path d="M1 2h9l5 6-5 6H1z" fill="#c5e6f4" stroke="#267ea8"/><path d="M4 5l6 6M10 5l-6 6" stroke="#267ea8" stroke-width="1.5"/>',
    burst: '<path d="M8 1v4M8 11v4M1 8h4M3 3l3 3M13 3l-3 3M3 13l3-3M11 8h4" stroke="#1f6a98" stroke-width="1.8"/><path d="M10 10l5 5M15 10l-5 5" stroke="#b43550" stroke-width="1.8"/>',
    'save-go': '<path d="M1 1h14v14H1z" fill="#cce5ef" stroke="#2b7697"/><path d="M4 1v5h8V1" stroke="#2b7697"/><circle cx="10" cy="10" r="3.5" fill="#1d6d44" stroke="none"/>',
    clipboard: '<path d="M1 3h9v12H1zM6 1h9v11H6z" fill="#c5e2f2" stroke="#2677a8"/><path d="M8 1h5v3H8z" fill="#fff" stroke="#2677a8"/>',
    maptek: tile('#075233', '<path d="M4 13L8 3l4 10M6 10h3" stroke="#e3f1e9" stroke-width="1.6"/>')
};

function draw(name) {
    return `<svg class="icon" viewBox="0 0 16 16" aria-hidden="true">${icons[name]}</svg>`;
}

document.querySelectorAll('[data-icons]').forEach(bar => {
    bar.innerHTML = bar.dataset.icons.split(' ').map(name =>
        `<button type="button" aria-label="${name.replace(/-/g, ' ')}">${draw(name)}</button>`).join('');
});

document.querySelectorAll('[data-icon]').forEach(el => {
    el.innerHTML = draw(el.dataset.icon);
});
```
